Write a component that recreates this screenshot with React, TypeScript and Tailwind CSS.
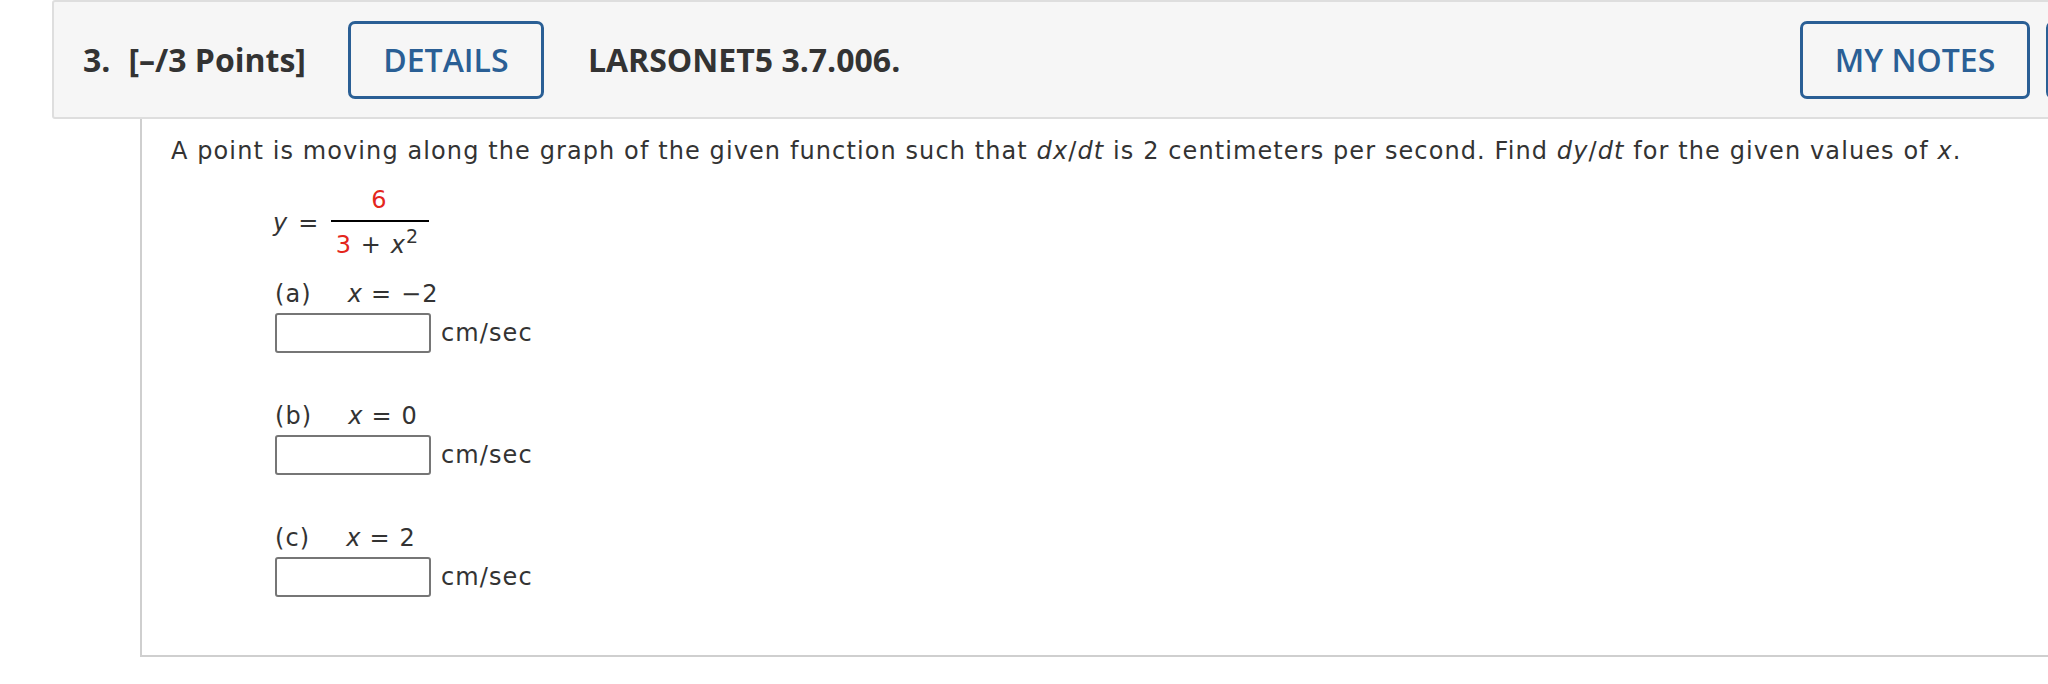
import type { ReactNode } from "react";

const body = "font-['DejaVu_Sans',Verdana,sans-serif] text-[24px] tracking-[1.1px] text-[#333]";

function OutlineButton({ children, className = "", label }: { children?: ReactNode; className?: string; label?: string }) {
  return (
    <button
      type="button"
      aria-label={label}
      className={`flex h-[78px] shrink-0 items-center justify-center rounded-[7px] border-[3px] border-[#2a5f95] font-['Open_Sans',sans-serif] text-[32px] font-semibold text-[#2a5f95] ${className}`}
    >
      {children}
    </button>
  );
}

function Part({ label, value, className = "" }: { label: string; value: string; className?: string }) {
  return (
    <div className={`ml-[104px] ${className}`}>
      <div className="flex items-center leading-[28px]">
        <span>({label})</span>
        <span className="ml-[36px] italic">x</span>
        <span className="ml-[8px]">= {value}</span>
      </div>
      <div className="mt-[5px] flex items-center">
        <input
          type="text"
          className="h-[40px] w-[156px] rounded-[3px] border-2 border-[#767676] bg-white outline-none"
        />
        <span className="ml-[10px]">cm/sec</span>
      </div>
    </div>
  );
}

export default function App() {
  return (
    <div className="relative h-[684px] w-[2048px] overflow-hidden bg-white">
      <header className="ml-[52px] flex h-[119px] w-[2226px] items-center rounded-[3px] border-2 border-[#dedede] bg-[#f6f6f6] pl-[29px] pr-[30px] font-['Open_Sans',sans-serif] text-[#333]">
        <div className="text-[32px] font-bold">
          3.<span className="ml-[18px]">[–/3 Points]</span>
        </div>
        <OutlineButton className="ml-[42px] w-[196px]">DETAILS</OutlineButton>
        <div className="ml-[44px] text-[32px] font-bold">LARSONET5 3.7.006.</div>
        <div className="flex-1" />
        <OutlineButton className="w-[230px]">MY NOTES</OutlineButton>
        <OutlineButton className="ml-[16px] w-[200px]" label="Ask your teacher" />
      </header>

      <section className={`ml-[140px] h-[538px] border-b-2 border-l-2 border-[#cfcfcf] pl-[29px] pt-[18px] ${body}`}>
        <p className="leading-[28px]">
          A point is moving along the graph of the given function such that <i>dx</i>/<i>dt</i> is 2
          centimeters per second. Find <i>dy</i>/<i>dt</i> for the given values of <i>x</i>.
        </p>

        <div className="ml-[102px] mt-[21px] flex items-center">
          <span className="italic">y</span>
          <span className="ml-[10px]">=</span>
          <div className="ml-[11px] flex flex-col items-center">
            <span className="leading-[28px] text-[#e4261c]">6</span>
            <div className="mt-[6px] h-[2px] w-[98px] bg-black" />
            <span className="mt-[9px] pr-[4px] leading-[28px]">
              <span className="text-[#e4261c]">3</span> + <i>x</i>
              <sup className="-top-[10px] text-[19px]">2</sup>
            </span>
          </div>
        </div>

        <Part label="a" value="−2" className="mt-[21px]" />
        <Part label="b" value="0" className="mt-[49px]" />
        <Part label="c" value="2" className="mt-[49px]" />
      </section>
    </div>
  );
}
